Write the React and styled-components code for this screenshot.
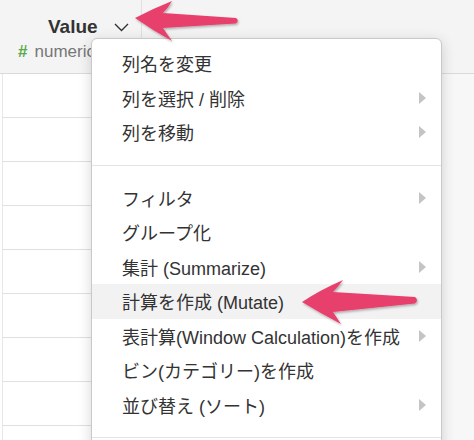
import React from "react";
import styled, { createGlobalStyle } from "styled-components";

const GlobalStyle = createGlobalStyle`
  body {
    margin: 0;
    font-family: "Liberation Sans", "Noto Sans CJK JP", sans-serif;
  }
`;

const Page = styled.div`
  position: relative;
  width: 474px;
  height: 440px;
  overflow: hidden;
  background: #f7f7f7;
`;

const HeaderRow = styled.div`
  display: flex;
  height: 73px;
  background: #f4f4f4;
  border-bottom: 1px solid #dadada;
`;

const ColumnHeader = styled.div`
  width: 142px;
  box-sizing: border-box;
  border-right: 1px solid #e0e0e0;
  padding: 15px 0 0 18px;
  display: flex;
  flex-direction: column;
  gap: 2px;
`;

const TitleLine = styled.div`
  display: flex;
  align-items: center;
  gap: 16px;
  padding-left: 30px;
  font-size: 19px;
  font-weight: 700;
  color: #333;
  height: 24px;
`;

const TypeLine = styled.div`
  display: flex;
  align-items: center;
  gap: 7px;
  font-size: 17px;
  color: #777;
  white-space: nowrap;
  height: 22px;
`;

const Hash = styled.span`
  color: #5aa84a;
  font-weight: 700;
`;

const Column = styled.div`
  width: 140px;
  border-left: 2px solid #fff;
`;

const Cell = styled.div`
  height: 43px;
  background: #fff;
  border-left: 1px solid #e8e8e8;
  border-bottom: 1px solid #e0e0e0;
`;

const Menu = styled.div`
  position: absolute;
  left: 91px;
  top: 38px;
  width: 351px;
  box-sizing: border-box;
  padding: 7px 0 40px;
  background: #fff;
  border: 1px solid #c9c9c9;
  border-radius: 6px;
  box-shadow: 0 3px 14px rgba(0, 0, 0, 0.16);
`;

const Item = styled.div`
  height: 34.5px;
  display: flex;
  align-items: center;
  justify-content: space-between;
  padding: 0 15px 0 30px;
  font-size: 18px;
  color: #333;
  white-space: nowrap;
  background: ${(p) => (p.$active ? "#f2f2f2" : "transparent")};
`;

const SubArrow = styled.span`
  flex: none;
  width: 0;
  height: 0;
  margin-left: 6px;
  border-left: 7px solid #c4c4c4;
  border-top: 6px solid transparent;
  border-bottom: 6px solid transparent;
`;

const Separator = styled.div`
  height: 1px;
  margin: 15px 0;
  background: #e3e3e3;
`;

const Overlay = styled.svg`
  position: absolute;
  left: 0;
  top: 0;
  pointer-events: none;
`;

const groups = [
  [
    { label: "列名を変更" },
    { label: "列を選択 / 削除", sub: true },
    { label: "列を移動", sub: true },
  ],
  [
    { label: "フィルタ", sub: true },
    { label: "グループ化" },
    { label: "集計 (Summarize)", sub: true },
    { label: "計算を作成 (Mutate)", active: true },
    { label: "表計算(Window Calculation)を作成", sub: true },
    { label: "ビン(カテゴリー)を作成" },
    { label: "並び替え (ソート)", sub: true },
  ],
];

const Chevron = () => (
  <svg width="15" height="9" viewBox="0 0 15 9">
    <polyline
      points="1,1 7.5,7.5 14,1"
      fill="none"
      stroke="#333"
      strokeWidth="1.4"
    />
  </svg>
);

export default function App() {
  return (
    <Page>
      <GlobalStyle />
      <HeaderRow>
        <ColumnHeader>
          <TitleLine>
            Value <Chevron />
          </TitleLine>
          <TypeLine>
            <Hash>#</Hash>numeric
          </TypeLine>
        </ColumnHeader>
      </HeaderRow>
      <Column>
        {Array.from({ length: 9 }).map((_, i) => (
          <Cell key={i} />
        ))}
      </Column>

      <Menu>
        {groups.map((items, gi) => (
          <React.Fragment key={gi}>
            {gi > 0 && <Separator />}
            {items.map((it) => (
              <Item key={it.label} $active={it.active}>
                <span>{it.label}</span>
                {it.sub && <SubArrow />}
              </Item>
            ))}
          </React.Fragment>
        ))}
        <Separator />
      </Menu>

      <Overlay width="474" height="440" viewBox="0 0 474 440">
        <defs>
          <filter id="sh" x="-20%" y="-40%" width="140%" height="180%">
            <feDropShadow dx="1" dy="1.5" stdDeviation="1.2" floodColor="#000" floodOpacity="0.3" />
          </filter>
        </defs>
        <g fill="#e8416c" filter="url(#sh)">
          <path d="M135,18 Q152,9 172,1 Q168,8 163,13 L236,18 Q239.5,20.5 236,23.5 L163,28 Q167,34 172,41 Q152,30 135,18 Z" />
          <path d="M302,302 Q320,290 343,280 Q338,287 333,292 L415,297 Q419,300 415,303.5 L333,312 Q337,318 341,324 Q320,313 302,302 Z" />
        </g>
      </Overlay>
    </Page>
  );
}
